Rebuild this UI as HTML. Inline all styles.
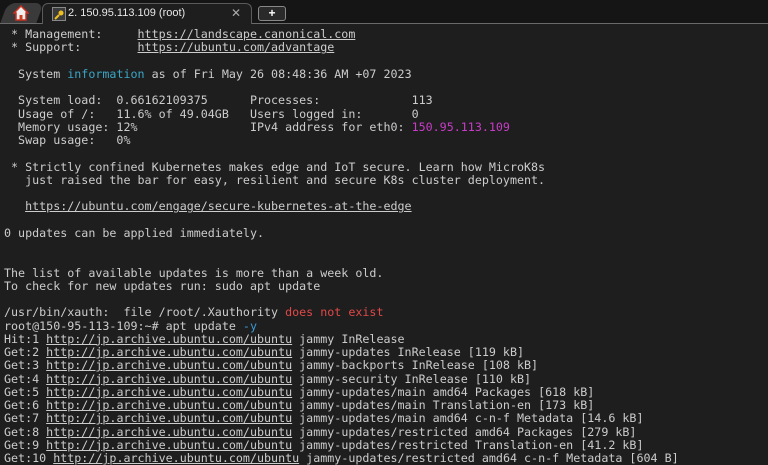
<!DOCTYPE html>
<html><head><meta charset="utf-8"><style>
html,body{margin:0;padding:0;width:768px;height:457px;overflow:hidden;background:#1e1e1e;}
.bar{position:absolute;left:0;top:0;width:768px;height:23px;background:#151515;border-bottom:1px solid #6a6a6a;}
.t1{position:absolute;left:4px;top:3px;width:36px;height:20px;background:#3a3a3a;border-radius:8px 8px 0 0;transform:skewX(-20deg);}
.t2{position:absolute;left:42px;top:3px;width:208px;height:20px;background:#1e1e1e;border:1px solid #5a5a5a;border-bottom:none;border-radius:6px 6px 0 0;}
.t2 span{position:absolute;left:25px;top:3px;font:11px "Liberation Sans",sans-serif;color:#e8e8e8;}
.key{position:absolute;left:9px;top:3px;width:12px;height:12px;background:#3c3c3c;border:1px solid #888;}
.x{position:absolute;right:10px;top:2px;color:#aaa;font:12px "Liberation Sans",sans-serif;}
.plus{position:absolute;left:258px;top:6px;width:26px;height:13px;background:#2a2a2a;border:1px solid #888;border-radius:3px;color:#fff;font:bold 12px/13px "Liberation Sans",sans-serif;text-align:center;}
pre{position:absolute;left:4px;top:28px;margin:0;font-family:"DejaVu Sans Mono","Liberation Mono",monospace;font-size:11.68px;line-height:13.25px;color:#cccccc;white-space:pre;}
u{text-decoration:underline;}
.c{color:#3aa6c6}.m{color:#c83cc8}.r{color:#e04848}.b{color:#3a9ad0}
</style></head><body>
<div class="bar">
<div class="t1"></div>
<svg style="position:absolute;left:13px;top:5px" width="16" height="16" viewBox="0 0 16 16"><path d="M8 1 L15 8 L13 8 L13 15 L3 15 L3 8 L1 8 Z" fill="#f0f0f0" stroke="#c83020" stroke-width="1.5"/><rect x="6.5" y="10" width="3" height="5" fill="#d04020"/></svg>
<div class="t2"><div class="key"><svg width="12" height="12" viewBox="0 0 12 12"><circle cx="8" cy="4" r="2.5" fill="#f0c020"/><path d="M6 6 L2 10" stroke="#f0c020" stroke-width="2"/></svg></div><span>2. 150.95.113.109 (root)</span><div class="x">✕</div></div>
<div class="plus">+</div>
</div>
<pre> * Management:     <u>https://landscape.canonical.com</u>
 * Support:        <u>https://ubuntu.com/advantage</u>

  System <span class="c">information</span> as of Fri May 26 08:48:36 AM +07 2023

  System load:  0.66162109375      Processes:             113
  Usage of /:   11.6% of 49.04GB   Users logged in:       0
  Memory usage: 12%                IPv4 address for eth0: <span class="m">150.95.113.109</span>
  Swap usage:   0%

 * Strictly confined Kubernetes makes edge and IoT secure. Learn how MicroK8s
   just raised the bar for easy, resilient and secure K8s cluster deployment.

   <u>https://ubuntu.com/engage/secure-kubernetes-at-the-edge</u>

0 updates can be applied immediately.


The list of available updates is more than a week old.
To check for new updates run: sudo apt update

/usr/bin/xauth:  file /root/.Xauthority <span class="r">does not exist</span>
root@150-95-113-109:~# apt update <span class="b">-y</span>
Hit:1 <u>http://jp.archive.ubuntu.com/ubuntu</u> jammy InRelease
Get:2 <u>http://jp.archive.ubuntu.com/ubuntu</u> jammy-updates InRelease [119 kB]
Get:3 <u>http://jp.archive.ubuntu.com/ubuntu</u> jammy-backports InRelease [108 kB]
Get:4 <u>http://jp.archive.ubuntu.com/ubuntu</u> jammy-security InRelease [110 kB]
Get:5 <u>http://jp.archive.ubuntu.com/ubuntu</u> jammy-updates/main amd64 Packages [618 kB]
Get:6 <u>http://jp.archive.ubuntu.com/ubuntu</u> jammy-updates/main Translation-en [173 kB]
Get:7 <u>http://jp.archive.ubuntu.com/ubuntu</u> jammy-updates/main amd64 c-n-f Metadata [14.6 kB]
Get:8 <u>http://jp.archive.ubuntu.com/ubuntu</u> jammy-updates/restricted amd64 Packages [279 kB]
Get:9 <u>http://jp.archive.ubuntu.com/ubuntu</u> jammy-updates/restricted Translation-en [41.2 kB]
Get:10 <u>http://jp.archive.ubuntu.com/ubuntu</u> jammy-updates/restricted amd64 c-n-f Metadata [604 B]</pre>
</body></html>
